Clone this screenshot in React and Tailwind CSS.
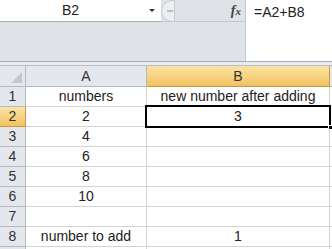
import React from "react";

const rows = [
  { n: 1, a: "numbers", b: "new number after adding" },
  { n: 2, a: "2", b: "3" },
  { n: 3, a: "4", b: "" },
  { n: 4, a: "6", b: "" },
  { n: 5, a: "8", b: "" },
  { n: 6, a: "10", b: "" },
  { n: 7, a: "", b: "" },
  { n: 8, a: "number to add", b: "1" },
  { n: 9, a: "", b: "" },
];

const App = () => {
  return (
    <div
      className="w-[332px] h-[249px] overflow-hidden bg-white text-[#222]"
      style={{ fontFamily: '"Liberation Sans", Arial, sans-serif' }}
    >
      {/* Formula bar */}
      <div className="flex h-[62px] border-b border-[#a7adb6]">
        <div className="w-[245px] flex flex-col bg-[#dfe3e8]">
          <div className="h-[22px] flex">
            <div className="w-[161px] bg-white border-b border-[#a7adb6] flex items-center relative">
              <span className="w-full text-center text-[14px] pr-[20px]">B2</span>
              <span className="absolute right-[6px] top-[9px] w-0 h-0 border-l-[3px] border-r-[3px] border-t-[3px] border-l-transparent border-r-transparent border-t-[#333]"></span>
            </div>
            <div className="flex-1 flex items-center border-b border-[#c4c9d0]">
              <div className="h-[22px] w-[14px] rounded-l-full bg-[#eceef1] border border-[#c4c9d0] flex items-center justify-center">
                <span className="block w-[6px] h-[2px] bg-[#b9bec5] ml-[3px]"></span>
              </div>
              <div className="flex-1"></div>
              <span
                className="italic font-bold text-[14px] text-[#444] mr-[4px]"
                style={{ fontFamily: '"Liberation Serif", "Times New Roman", serif' }}
              >
                f<span className="text-[11px]">x</span>
              </span>
            </div>
          </div>
          <div className="flex-1"></div>
        </div>
        <div className="flex-1 bg-white border-l border-[#c4c9d0] pl-[8px] pt-[2px] text-[14px]">
          =A2+B8
        </div>
      </div>
      <div className="h-[4px] bg-[#e8ebef] border-b border-[#b8bec6]"></div>

      {/* Grid */}
      <div className="grid grid-cols-[26px_121px_183px_2px] text-[14px]">
        {/* Header row */}
        <div className="h-[21px] bg-[#e4e7eb] border-r border-b border-[#b3b9c1] flex items-end justify-end p-[3px]">
          <svg width="11" height="11" viewBox="0 0 11 11">
            <polygon points="11,0 11,11 0,11" fill="#c3c8ce" />
          </svg>
        </div>
        <div className="h-[21px] bg-[#e4e7eb] border-r border-b border-[#b3b9c1] flex items-center justify-center text-[#333]">A</div>
        <div className="h-[21px] bg-gradient-to-b from-[#fbe3a3] to-[#f2c35f] border-r border-b border-[#c29a4b] flex items-center justify-center text-[#333]">B</div>
        <div className="h-[21px] bg-[#e4e7eb] border-b border-[#b3b9c1]"></div>

        {rows.map((r) => (
          <React.Fragment key={r.n}>
            <div
              className={
                r.n === 2
                  ? "h-[20px] bg-gradient-to-b from-[#fbe3a3] to-[#f2c35f] border-r border-b border-[#c29a4b] flex items-center justify-center text-[#333]"
                  : "h-[20px] bg-[#e4e7eb] border-r border-b border-[#b3b9c1] flex items-center justify-center text-[#333]"
              }
            >
              {r.n < 9 ? r.n : ""}
            </div>
            <div className="h-[20px] border-r border-b border-[#d4d4d4] flex items-center justify-center">
              {r.a}
            </div>
            {r.n === 2 ? (
              <div className="h-[20px] relative border-r border-b border-[#d4d4d4] flex items-center justify-center">
                <div className="absolute left-[-2px] top-[-2px] right-[-2px] bottom-[-2px] border-2 border-black"></div>
                <div className="absolute right-[-4px] bottom-[-4px] w-[5px] h-[5px] bg-black border border-white"></div>
                {r.b}
              </div>
            ) : (
              <div className="h-[20px] border-r border-b border-[#d4d4d4] flex items-center justify-center">
                {r.b}
              </div>
            )}
            <div className="h-[20px] border-b border-[#d4d4d4]"></div>
          </React.Fragment>
        ))}
      </div>
    </div>
  );
};

export default App;
